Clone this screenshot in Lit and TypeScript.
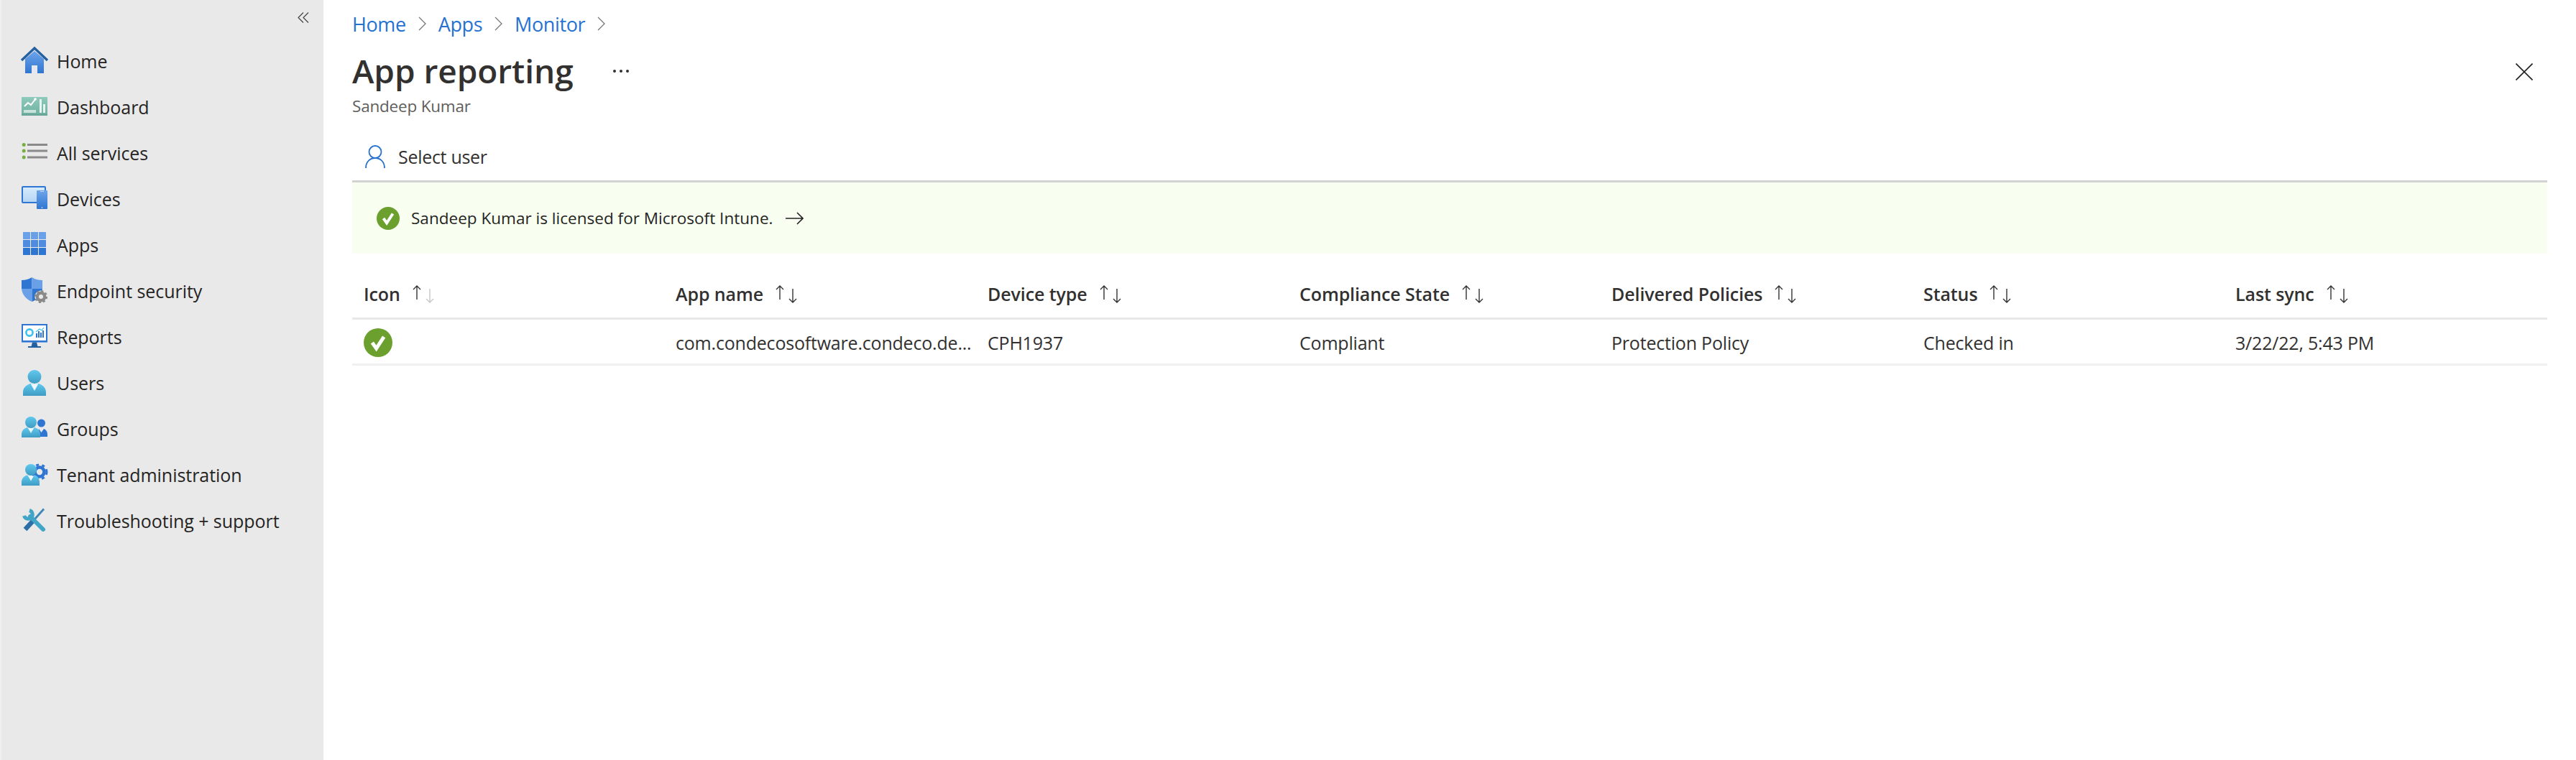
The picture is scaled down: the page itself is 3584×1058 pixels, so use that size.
import { LitElement, html, css, svg } from "lit";
import { customElement } from "lit/decorators.js";

const defs = svg`<defs>
<linearGradient id="b1" x1="0" y1="0" x2="0" y2="1"><stop offset="0" stop-color="#6fa4ea"/><stop offset="1" stop-color="#2f76d2"/></linearGradient>
<linearGradient id="b2" x1="0" y1="0" x2="0" y2="1"><stop offset="0" stop-color="#5fc8ee"/><stop offset="1" stop-color="#3f9cc4"/></linearGradient>
<linearGradient id="b3" x1="0" y1="0" x2="0" y2="1"><stop offset="0" stop-color="#d8ecfb"/><stop offset="1" stop-color="#b4d4f4"/></linearGradient>
<linearGradient id="t1" x1="0" y1="0" x2="0" y2="1"><stop offset="0" stop-color="#8fcabc"/><stop offset="1" stop-color="#6fb0a0"/></linearGradient>
</defs>`;

const icons: Record<string, unknown> = {
  home: svg`<path d="M5 15V35h26V15L18 4z" fill="url(#b1)"/><path d="M14 35V24h8v11z" fill="#e4e8f0"/><path d="M0 17L18 0 36 17" fill="none" stroke="#24609f" stroke-width="3.4"/>`,
  dash: svg`<rect y="4" width="36" height="26" rx="1" fill="url(#t1)"/><rect y="27.5" width="36" height="2.5" fill="#6aa597"/><path d="M4 17l5-5 4 3 7-9" fill="none" stroke="#fff" stroke-width="2"/><circle cx="19" cy="7" r="1.8" fill="#fff"/><rect x="3" y="22" width="17" height="4" fill="#c9e3dc"/><rect x="25" y="7" width="3" height="19" fill="#e6f3ef"/><rect x="30" y="14" width="3" height="12" fill="#e6f3ef"/>`,
  list: svg`<g fill="#76b041"><circle cx="3.2" cy="6.5" r="2.5"/><circle cx="3.2" cy="15" r="2.5"/><circle cx="3.2" cy="24" r="2.5"/></g><g fill="#8a8a8a"><rect x="8" y="5" width="28" height="3"/><rect x="8" y="13.5" width="28" height="3"/><rect x="8" y="22.5" width="28" height="3"/></g>`,
  dev: svg`<rect x="1" y="1" width="32" height="22" rx="1" fill="url(#b3)" stroke="#2f76d2" stroke-width="2"/><rect x="21" y="6" width="15" height="26" rx="1" fill="url(#b1)"/><rect x="26" y="7" width="5" height="1" fill="#bcd6f4"/><circle cx="28.5" cy="30" r=".8" fill="#fff"/>`,
  apps: svg`<g>${[0, 1, 2].flatMap((r) => [0, 1, 2].map((c) => svg`<rect x="${2 + c * 11}" y="${r * 11}" width="10" height="10" rx=".6" fill="${["#6aa0e8", "#4f8ce0", "#2f76d2"][r]}"/>`))}</g>`,
  shield: svg`<path d="M0 3C6 3 10 1.5 14.5 -1V15H0V10z" fill="#2f76d2"/><path d="M14.5 -1C18 1.5 23 3 29 3V15H14.5z" fill="#6aa0e8"/><path d="M0 15H14.5V33C7 30 1 24 0 15z" fill="#6aa0e8"/><path d="M14.5 15H29C28 24 22 30 14.5 33z" fill="#2f76d2"/><circle cx="27" cy="26" r="8.6" fill="#e9e9e9"/><circle cx="27" cy="26" r="5.2" fill="none" stroke="#8a8a8a" stroke-width="4.4"/><circle cx="27" cy="26" r="7.8" fill="none" stroke="#8a8a8a" stroke-width="2.6" stroke-dasharray="3 3.13"/>`,
  report: svg`<rect x="1" y="1" width="34" height="23" fill="#fff" stroke="#2f76d2" stroke-width="2"/><rect y="24" width="36" height="1.6" fill="#2f76d2"/><path d="M15 25.6h6l1.5 6h-9z" fill="#24609f"/><rect x="9" y="31" width="18" height="2" fill="#24609f"/><circle cx="11" cy="12" r="4.6" fill="none" stroke="#3cc0ec" stroke-width="2.6"/><g fill="#2f76d2"><rect x="20" y="13" width="2" height="6"/><rect x="23" y="10" width="2" height="9"/><rect x="26" y="12" width="2" height="7"/><rect x="29" y="9" width="2" height="10"/></g><path d="M20 11l5-4 3 2 3-4" fill="none" stroke="#3cc0ec" stroke-width="1.2"/>`,
  user: svg`<circle cx="18" cy="9.5" r="9.5" fill="url(#b2)"/><path d="M2 36V31C2 24 8 20 13 19L18 27 23 19C28 20 34 24 34 31V36z" fill="url(#b2)"/><path d="M13 20h10l-5 9z" fill="#eef7fb"/>`,
  group: svg`<circle cx="27.5" cy="10" r="5.5" fill="#2f76d2"/><path d="M24 18l3.5 5 3.5-5c3 1 5 4 5 7.5V29H22z" fill="#2f76d2"/><circle cx="13" cy="9" r="8" fill="url(#b2)"/><path d="M0 30V26C0 20 4 17 8 16L13 22 18 16C22 17 26 20 26 26V30z" fill="url(#b2)"/><path d="M9 17h8l-4 7z" fill="#eef7fb"/>`,
  tenant: svg`<circle cx="25" cy="14" r="6.5" fill="none" stroke="#2f76d2" stroke-width="4.6"/><circle cx="25" cy="14" r="10" fill="none" stroke="#2f76d2" stroke-width="3" stroke-dasharray="4 4.38"/><circle cx="13" cy="11" r="8" fill="url(#b2)"/><path d="M0 33V28C0 23 4 19 8 18.5L13 24 18 18.5C22 19 25 23 25 28V33z" fill="url(#b2)"/><path d="M9 19.5h8l-4 7z" fill="#eef7fb"/>`,
  tool: svg`<path d="M31 1.5L18.5 15.5" stroke="#3f86b8" stroke-width="2.8"/><path d="M17 17L5 30" stroke="#2c6ea6" stroke-width="6.4"/><path d="M11 3.5A6 6 0 1 1 3.5 11" fill="none" stroke="#41a5c8" stroke-width="5"/><path d="M12 12L30 30" stroke="#41a5c8" stroke-width="6" stroke-linecap="round"/>`,
};

const nav: [string, string][] = [
  ["home", "Home"], ["dash", "Dashboard"], ["list", "All services"], ["dev", "Devices"], ["apps", "Apps"],
  ["shield", "Endpoint security"], ["report", "Reports"], ["user", "Users"], ["group", "Groups"],
  ["tenant", "Tenant administration"], ["tool", "Troubleshooting + support"],
];
const cols: [string, string][] = [
  ["Icon", ""], ["App name", "com.condecosoftware.condeco.de..."], ["Device type", "CPH1937"],
  ["Compliance State", "Compliant"], ["Delivered Policies", "Protection Policy"], ["Status", "Checked in"],
  ["Last sync", "3/22/22, 5:43 PM"],
];

const check = (s: number) => html`<svg width=${s} height=${s} viewBox="0 0 32 32"><circle cx="16" cy="16" r="16" fill="#6ba02f"/><path d="M9.5 16l4.6 6.5 8.4-13" fill="none" stroke="#fff" stroke-width="4"/></svg>`;
const sort = (dim: boolean) => html`<svg class="sort" width="36" height="26" viewBox="0 0 36 26"><path d="M8 21V2M3 7l5-5 5 5" fill="none" stroke="#333" stroke-width="1.4"/><path d="M26 6V25M21 20l5 5 5-5" fill="none" stroke=${dim ? "#c8c8c8" : "#333"} stroke-width="1.4"/></svg>`;
const chev = html`<svg class="chev" width="11" height="20" viewBox="0 0 11 20"><path d="M1 1l9 9-9 9" fill="none" stroke="#777" stroke-width="1.3"/></svg>`;

@customElement("app-root")
export class AppRoot extends LitElement {
  static styles = css`
    :host { display: flex; height: 1058px; background: #fff; color: #323130; font-family: "Open Sans", "Noto Sans", sans-serif; overflow: hidden; }
    .side { width: 450px; flex: none; box-sizing: border-box; background: #e9e9e9; border-left: 2px solid #f0f0f0; padding: 17px 20px 0 28px; }
    .collapse { display: flex; justify-content: flex-end; height: 36px; }
    .nav { display: flex; flex-direction: column; }
    .item { display: flex; align-items: center; height: 64px; gap: 13px; font-size: 25px; letter-spacing: -0.05px; color: #252423; }
    .item svg { flex: none; overflow: visible; }
    .main { flex: 1; min-width: 0; box-sizing: border-box; padding: 0 40px; display: flex; flex-direction: column; }
    .crumbs { display: flex; align-items: center; height: 66px; font-size: 27px; letter-spacing: -0.4px; color: #2672cf; }
    .chev { margin: 0 17px; }
    .head { display: flex; align-items: flex-start; justify-content: space-between; height: 66px; padding-right: 20px; }
    .titlewrap { display: flex; align-items: center; gap: 55px; }
    h1 { margin: 0; font-size: 46px; line-height: 66px; font-weight: 600; letter-spacing: -0.05px; color: #323130; margin-top: -1px; }
    .dots { display: flex; gap: 5px; }
    .dots i { width: 4px; height: 4px; border-radius: 50%; background: #323130; }
    .close { margin-top: 22px; }
    .sub { font-size: 22.5px; line-height: 34px; letter-spacing: -0.2px; color: #605e5c; margin-top: -1px; }
    .toolbar { display: flex; align-items: center; gap: 18px; height: 86px; box-sizing: border-box; padding: 20px 0 0 18px; font-size: 25px; letter-spacing: -0.3px; }
    .line { height: 3px; background: #d2d2d2; }
    .banner { display: flex; align-items: center; height: 99px; background: #f8fff0; padding: 0 0 0 34px; box-sizing: border-box; gap: 16px; font-size: 22.5px; letter-spacing: 0.02px; color: #252423; }
    .banner svg:last-child { margin-left: 2px; }
    .grid { display: grid; grid-template-columns: repeat(7, 434px); padding-left: 16px; }
    .ths { height: 92px; align-items: center; border-bottom: 3px solid #e8e8e8; box-sizing: border-box; padding-top: 22px; }
    .th { display: flex; align-items: center; gap: 15px; font-size: 25px; font-weight: 600; letter-spacing: -0.1px; color: #323130; }
    .trs { height: 64px; align-items: center; border-bottom: 3px solid #f0f0f0; box-sizing: border-box; padding-top: 3px; }
    .td { font-size: 25px; letter-spacing: -0.2px; color: #323130; display: flex; align-items: center; }
  `;
  render() {
    return html`
      <aside class="side">
        <div class="collapse"><svg width="16" height="15" viewBox="0 0 16 15"><path d="M8 .5l-7 7 7 7M15 .5l-7 7 7 7" fill="none" stroke="#444" stroke-width="1.2"/></svg></div>
        <nav class="nav">
          ${nav.map(([i, t]) => html`<div class="item"><svg width="36" height="36" viewBox="0 0 36 36">${defs}${icons[i]}</svg><span>${t}</span></div>`)}
        </nav>
      </aside>
      <main class="main">
        <div class="crumbs"><span>Home</span>${chev}<span>Apps</span>${chev}<span>Monitor</span>${chev}</div>
        <div class="head">
          <div class="titlewrap"><h1>App reporting</h1><div class="dots"><i></i><i></i><i></i></div></div>
          <svg class="close" width="24" height="24" viewBox="0 0 24 24"><path d="M.5.5l23 23M23.5.5l-23 23" fill="none" stroke="#222" stroke-width="1.6"/></svg>
        </div>
        <div class="sub">Sandeep Kumar</div>
        <div class="toolbar">
          <svg width="28" height="32" viewBox="0 0 28 32"><circle cx="14" cy="9.5" r="8.5" fill="none" stroke="#2672cf" stroke-width="1.8"/><path d="M1 32C1 24 6 18 14 18s13 6 13 14" fill="none" stroke="#2672cf" stroke-width="1.8"/></svg>
          <span>Select user</span>
        </div>
        <div class="line"></div>
        <div class="banner">
          ${check(32)}<span>Sandeep Kumar is licensed for Microsoft Intune.</span>
          <svg width="25" height="18" viewBox="0 0 25 18"><path d="M0 9h24M16 1l8 8-8 8" fill="none" stroke="#222" stroke-width="1.6"/></svg>
        </div>
        <div class="grid ths">${cols.map(([h], i) => html`<div class="th"><span>${h}</span>${sort(i === 0)}</div>`)}</div>
        <div class="grid trs">${cols.map(([, v], i) => html`<div class="td">${i === 0 ? check(40) : v}</div>`)}</div>
      </main>
    `;
  }
}
